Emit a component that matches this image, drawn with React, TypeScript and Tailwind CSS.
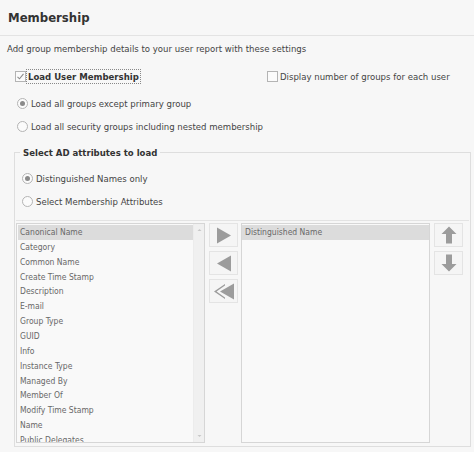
import React from "react";

const attrs = [
  "Canonical Name",
  "Category",
  "Common Name",
  "Create Time Stamp",
  "Description",
  "E-mail",
  "Group Type",
  "GUID",
  "Info",
  "Instance Type",
  "Managed By",
  "Member Of",
  "Modify Time Stamp",
  "Name",
  "Public Delegates",
  "Security Identifier",
];

function Radio({ checked, label }: { checked?: boolean; label: string }) {
  return (
    <div className="flex items-center gap-[3px]">
      <span className="flex h-[11px] w-[11px] items-center justify-center rounded-full border border-[#b4b4b4] bg-[#fbfbfb]">
        {checked ? <span className="h-[5px] w-[5px] rounded-full bg-[#8a8a8a]" /> : null}
      </span>
      <span>{label}</span>
    </div>
  );
}

function Box({ checked }: { checked?: boolean }) {
  return (
    <span className="flex h-[11px] w-[11px] items-center justify-center border border-[#b4b4b4] bg-[#fbfbfb]">
      {checked ? (
        <svg width="9" height="9" viewBox="0 0 9 9">
          <path d="M1.5 4.8 L3.5 6.8 L7.5 1.8" fill="none" stroke="#8a8a8a" strokeWidth="1.1" />
        </svg>
      ) : null}
    </span>
  );
}

function Btn({ children }: { children: React.ReactNode }) {
  return (
    <div className="flex h-[24px] w-[29px] items-center justify-center border border-[#e4e4e4] bg-[#f5f5f5]">
      {children}
    </div>
  );
}

export default function App() {
  return (
    <div
      className="h-[452px] w-[474px] overflow-hidden bg-[#f7f7f7] text-[9.5px] leading-[13px] text-[#444]"
      style={{ fontFamily: "'DejaVu Sans Condensed', 'DejaVu Sans', sans-serif" }}
    >
      {/* titulo */}
      <div className="flex h-[36px] items-center border-b border-[#e3e3e3] pl-[8px]">
        <h1 className="text-[13px] font-bold text-[#333]">Membership</h1>
      </div>

      <div className="flex h-[24px] items-center pl-[7px]">
        Add group membership details to your user report with these settings
      </div>

      <div className="flex h-[32px] items-center">
        <div className="flex w-[267px] items-center pl-[15px]">
          <Box checked />
          <span className="border border-dotted border-[#888] px-[1px] font-bold text-[#333]">
            Load User Membership
          </span>
        </div>
        <div className="flex items-center gap-[2px]">
          <Box />
          <span>Display number of groups for each user</span>
        </div>
      </div>

      <div className="flex h-[22px] items-center pl-[17px]">
        <Radio checked label="Load all groups except primary group" />
      </div>
      <div className="flex h-[24px] items-center pl-[17px]">
        <Radio label="Load all security groups including nested membership" />
      </div>

      <fieldset className="ml-[14px] mr-[3px] mt-[8px] border border-[#dedede] px-[1px] pb-[3px]">
        <legend className="ml-[4px] px-[3px] font-bold text-[#333]">Select AD attributes to load</legend>

        <div className="mt-[8px] pl-[6px]">
          <div className="flex h-[22px] items-center">
            <Radio checked label="Distinguished Names only" />
          </div>
          <div className="flex h-[24px] items-center">
            <Radio label="Select Membership Attributes" />
          </div>
        </div>

        <div className="mt-[7px] border-t border-[#e3e3e3] pt-[2px]">
          <div className="flex items-start text-[8.5px] text-[#686868]">
            {/* lista de atributos */}
            <div className="flex h-[220px] w-[189px] overflow-hidden border border-[#d6d6d6] bg-[#f9f9f9]">
              <div className="flex-1 pl-[1px] pt-[1px]">
                {attrs.map((a, i) => (
                  <div
                    key={a}
                    className={"h-[14.86px] pl-[2px] leading-[14.86px] " + (i === 0 ? "bg-[#dcdcdc]" : "")}
                  >
                    {a}
                  </div>
                ))}
              </div>
              <div className="flex w-[11px] flex-col justify-between border-l border-[#ececec] bg-[#f0f0f0] py-[3px]">
                <svg width="11" height="5" viewBox="0 0 11 5">
                  <path d="M3.5 4 L5.5 2 L7.5 4 Z" fill="#c8c8c8" />
                </svg>
                <svg width="11" height="5" viewBox="0 0 11 5">
                  <path d="M3.5 1 L5.5 3 L7.5 1 Z" fill="#c8c8c8" />
                </svg>
              </div>
            </div>

            <div className="ml-[4px] flex flex-col gap-[4px]">
              <Btn>
                <svg width="16" height="17" viewBox="0 0 16 17">
                  <path d="M1 0.5 L15 8.5 L1 16.5 Z" fill="#9c9c9c" />
                </svg>
              </Btn>
              <Btn>
                <svg width="16" height="17" viewBox="0 0 16 17">
                  <path d="M15 0.5 L1 8.5 L15 16.5 Z" fill="#9c9c9c" />
                </svg>
              </Btn>
              <Btn>
                <svg width="22" height="17" viewBox="0 0 22 17">
                  <path d="M12 1 L1 8.5 L12 16 L12 14.5 L3.5 8.5 L12 2.5 Z" fill="#9c9c9c" />
                  <path d="M21 0.5 L7 8.5 L21 16.5 Z" fill="#9c9c9c" />
                </svg>
              </Btn>
            </div>

            {/* lista seleccionada */}
            <div className="ml-[3px] h-[220px] w-[189px] border border-[#d6d6d6] bg-[#f9f9f9] pt-[1px]">
              <div className="h-[15px] bg-[#dcdcdc] pl-[3px] leading-[15px]">Distinguished Name</div>
            </div>

            <div className="ml-[4px] flex flex-col gap-[4px]">
              <Btn>
                <svg width="16" height="18" viewBox="0 0 16 18">
                  <path d="M8 0.5 L15.5 8 L11 8 L11 17.5 L5 17.5 L5 8 L0.5 8 Z" fill="#9c9c9c" />
                </svg>
              </Btn>
              <Btn>
                <svg width="16" height="18" viewBox="0 0 16 18">
                  <path d="M8 17.5 L15.5 10 L11 10 L11 0.5 L5 0.5 L5 10 L0.5 10 Z" fill="#9c9c9c" />
                </svg>
              </Btn>
            </div>
          </div>
        </div>
      </fieldset>
    </div>
  );
}
